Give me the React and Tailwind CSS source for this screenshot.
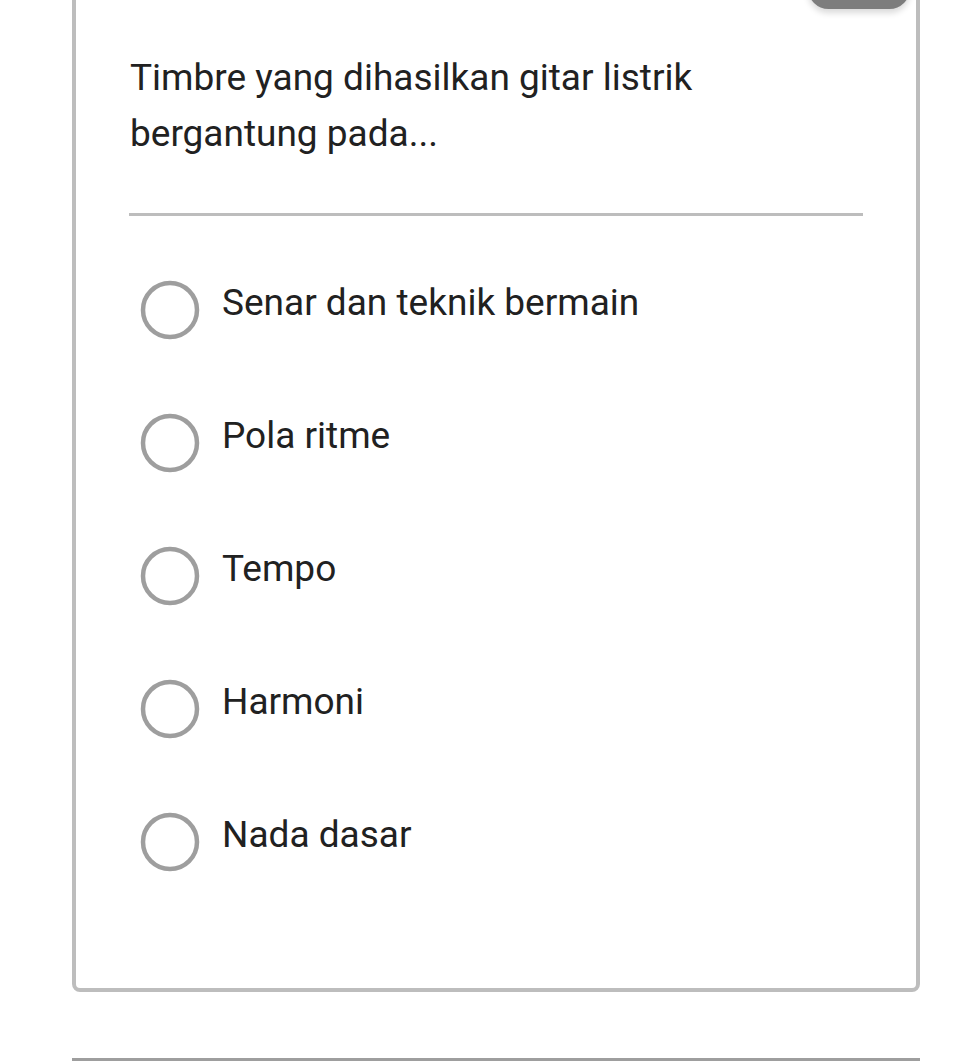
const options = ['Senar dan teknik bermain', 'Pola ritme', 'Tempo', 'Harmoni', 'Nada dasar'];

function Radio() {
  return (
    <svg width="60" height="60" viewBox="0 0 60 60" className="shrink-0">
      <circle cx="30" cy="30" r="27" fill="none" stroke="#9e9e9e" strokeWidth="4.5" />
    </svg>
  );
}

export default function App() {
  return (
    <div className="w-[980px] h-[1061px] overflow-hidden bg-white text-[#212121]" style={{ fontFamily: 'Roboto, "Noto Sans", sans-serif' }}>
      <div className="ml-[72px] w-[848px] -mt-[70px] border-4 border-[#bdbdbd] rounded-[8px]">
        <div className="flex justify-end h-[78px] pr-[6px]">
          <div className="mt-[34px] w-[102px] h-[41px] rounded-full bg-[#7d7d7d] shadow-[0_4px_6px_rgba(0,0,0,0.15)]" />
        </div>
        <div className="mt-[38px] pl-[54px] max-w-[680px] text-[37px] leading-[56px]">
          Timbre yang dihasilkan gitar listrik bergantung pada...
        </div>
        <div className="mt-[51px] ml-[53px] w-[734px] h-[3px] bg-[#bdbdbd]" />
        <div className="mt-[27px] pb-[80px] flex flex-col">
          {options.map((o) => (
            <div key={o} className="h-[133px] flex items-center pl-[64px] gap-[22px]">
              <Radio />
              <span className="text-[37px] leading-none mb-[14px]">{o}</span>
            </div>
          ))}
        </div>
      </div>
      <div className="mt-[66px] ml-[72px] w-[848px] h-[3px] bg-[#9e9e9e]" />
    </div>
  );
}
